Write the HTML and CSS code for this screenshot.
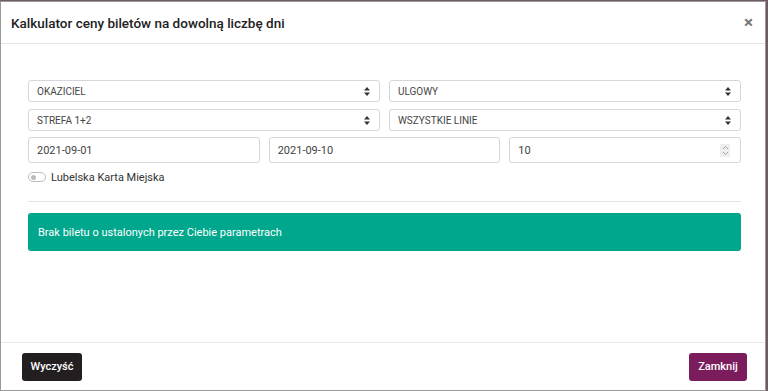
FILE: index.html
```html
<!DOCTYPE html>
<html lang="pl">
<head>
<meta charset="utf-8">
<link rel="stylesheet" href="styles.css">
</head>
<body>
<div class="modal">
  <div class="modal-header">
    <h1 class="modal-title">Kalkulator ceny biletów na dowolną liczbę dni</h1>
    <span class="close">&times;</span>
  </div>
  <div class="modal-body">
    <div class="grid2">
      <div class="select"><span>OKAZICIEL</span><svg class="arr" width="6" height="9" viewBox="0 0 6 9"><path d="M0 3.5L3 0 6 3.5z M0 5.5L3 9 6 5.5z" fill="#333"/></svg></div>
      <div class="select"><span>ULGOWY</span><svg class="arr" width="6" height="9" viewBox="0 0 6 9"><path d="M0 3.5L3 0 6 3.5z M0 5.5L3 9 6 5.5z" fill="#333"/></svg></div>
      <div class="select"><span>STREFA 1+2</span><svg class="arr" width="6" height="9" viewBox="0 0 6 9"><path d="M0 3.5L3 0 6 3.5z M0 5.5L3 9 6 5.5z" fill="#333"/></svg></div>
      <div class="select"><span>WSZYSTKIE LINIE</span><svg class="arr" width="6" height="9" viewBox="0 0 6 9"><path d="M0 3.5L3 0 6 3.5z M0 5.5L3 9 6 5.5z" fill="#333"/></svg></div>
    </div>
    <div class="grid3">
      <div class="input">2021-09-01</div>
      <div class="input">2021-09-10</div>
      <div class="input"><span>10</span><span class="spin"><svg width="7" height="11" viewBox="0 0 7 11"><path d="M1 4L3.5 1.5 6 4 M1 7L3.5 9.5 6 7" fill="none" stroke="#999" stroke-width="0.9"/></svg></span></div>
    </div>
    <div class="switch-row">
      <span class="switch"><span class="knob"></span></span>
      <span class="switch-label">Lubelska Karta Miejska</span>
    </div>
    <hr class="sep">
    <div class="alert">Brak biletu o ustalonych przez Ciebie parametrach</div>
  </div>
  <div class="modal-footer">
    <button class="btn btn-dark">Wyczyść</button>
    <button class="btn btn-purple">Zamknij</button>
  </div>
</div>
</body>
</html>
```
FILE: styles.css
```css
html, body {
  margin: 0;
  padding: 0;
}
body {
  width: 768px;
  height: 391px;
  background: #6e5a68;
  font-family: Roboto, "Liberation Sans", sans-serif;
  overflow: hidden;
}
.modal {
  box-sizing: border-box;
  margin-top: 1px;
  width: 766px;
  height: 390px;
  background: #fff;
  border: 1px solid #9a9a9a;
  display: flex;
  flex-direction: column;
}
.modal-header {
  height: 41px;
  border-bottom: 1px solid #e4e4e4;
  display: flex;
  align-items: center;
  justify-content: space-between;
  padding: 0 12px 0 10px;
  flex-shrink: 0;
}
.modal-title {
  margin: 0;
  font-size: 13.5px;
  font-weight: 500;
  color: #222;
}
.close {
  font-size: 17px;
  font-weight: 700;
  color: #777;
  line-height: 1;
}
.modal-body {
  flex: 1;
  padding: 36px 24px 0 27px;
}
.grid2 {
  display: grid;
  grid-template-columns: 1fr 1fr;
  column-gap: 9px;
  row-gap: 7px;
}
.select {
  box-sizing: border-box;
  height: 22px;
  border: 1px solid #d3d7dd;
  border-radius: 3px;
  display: flex;
  align-items: center;
  justify-content: space-between;
  padding: 0 9px 0 8px;
  font-size: 10px;
  color: #444;
}
.grid3 {
  display: grid;
  grid-template-columns: 1fr 1fr 1fr;
  column-gap: 9px;
  margin-top: 6px;
}
.input {
  box-sizing: border-box;
  height: 26px;
  border: 1px solid #d3d7dd;
  border-radius: 3px;
  display: flex;
  align-items: center;
  justify-content: space-between;
  padding: 0 10px 0 8px;
  font-size: 11px;
  color: #444;
}
.spin {
  width: 10px;
  height: 13px;
  background: #eeeeee;
  display: flex;
  align-items: center;
  justify-content: center;
}
.switch-row {
  display: flex;
  align-items: center;
  margin-top: 8px;
  height: 12px;
}
.switch {
  box-sizing: border-box;
  width: 18px;
  height: 10px;
  border: 1px solid #bbb;
  border-radius: 5px;
  display: flex;
  align-items: center;
  padding-left: 2px;
}
.knob {
  width: 5px;
  height: 5px;
  border-radius: 50%;
  background: #bbb;
}
.switch-label {
  margin-left: 5px;
  font-size: 11px;
  color: #333;
}
.sep {
  border: 0;
  border-top: 1px solid #e4e4e4;
  margin: 18px 0 11px;
}
.alert {
  box-sizing: border-box;
  height: 38px;
  background: #00a78c;
  border-radius: 3px;
  color: #fff;
  font-size: 11px;
  display: flex;
  align-items: center;
  padding-left: 10px;
}
.modal-footer {
  height: 47px;
  border-top: 1px solid #e8e8ea;
  display: flex;
  align-items: center;
  justify-content: space-between;
  padding: 0 18px 0 21px;
  flex-shrink: 0;
}
.btn {
  height: 28px;
  border: 0;
  border-radius: 3px;
  color: #fff;
  font-family: Roboto, "Liberation Sans", sans-serif;
  font-size: 11px;
  font-weight: 500;
  padding: 0;
}
.btn-dark {
  background: #231f20;
  width: 60px;
}
.btn-purple {
  background: #7b1d5d;
  width: 58px;
}
```
